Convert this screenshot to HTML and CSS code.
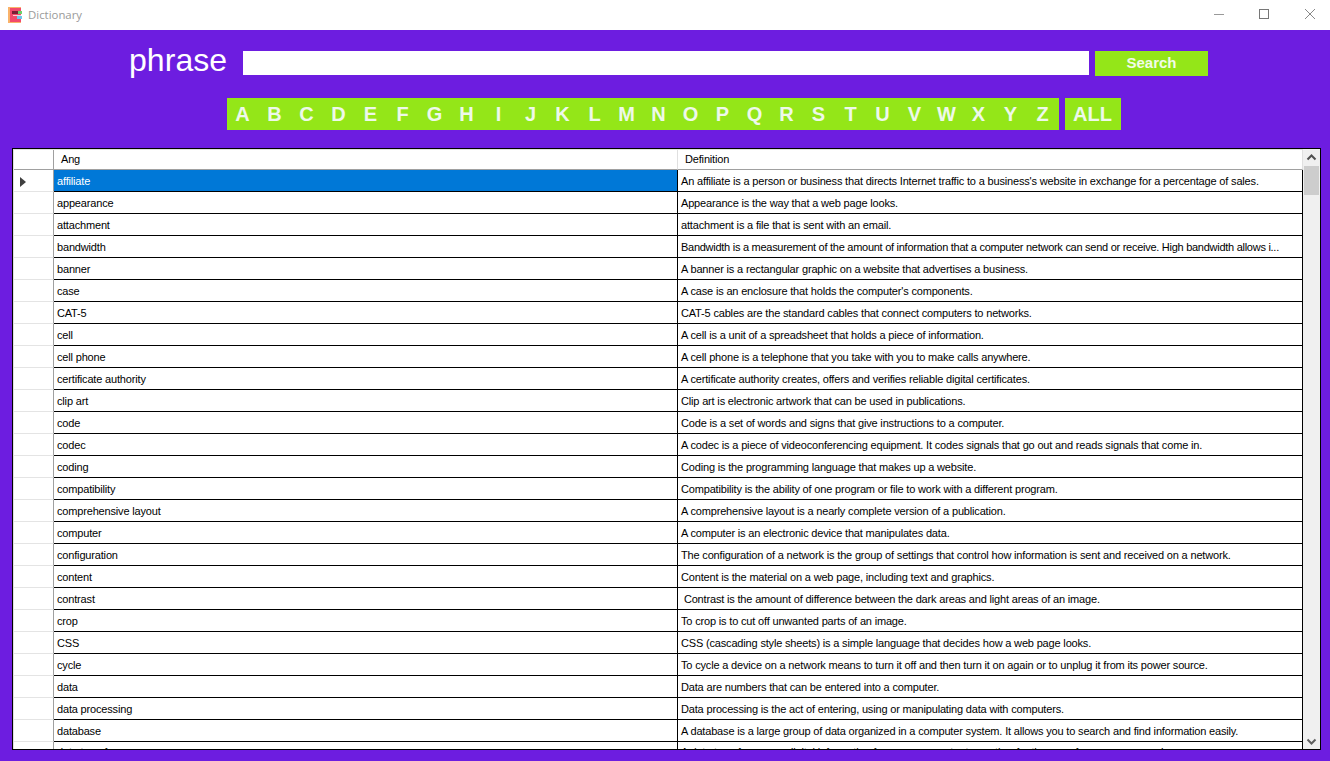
FILE: index.html
```html
<!DOCTYPE html>
<html lang="en">
<head>
<meta charset="utf-8">
<title>Dictionary</title>
<link rel="stylesheet" href="styles.css">
</head>
<body>
<div class="window">
  <header class="titlebar">
    <svg class="app-icon" width="15" height="16" viewBox="0 0 15 16">
      <rect x="0" y="0" width="13" height="16" fill="#f9b26a"/>
      <rect x="2" y="1" width="11" height="14" fill="#f2496b"/>
      <rect x="4" y="4" width="6" height="3" fill="#7a2036"/>
      <rect x="5" y="8" width="8" height="1" fill="#f7d0d8"/>
      <rect x="10" y="4" width="4" height="3" fill="#6fcf6a"/>
      <rect x="9" y="9" width="5" height="3" fill="#6cc4ea"/>
    </svg>
    <span class="app-title">Dictionary</span>
    <div class="win-controls">
      <svg width="12" height="12" viewBox="0 0 12 12"><path d="M1 6.5H11" stroke="#999" fill="none"/></svg>
      <svg width="12" height="12" viewBox="0 0 12 12"><rect x="1.5" y="1.5" width="9" height="9" stroke="#777" fill="none"/></svg>
      <svg class="close" width="12" height="12" viewBox="0 0 12 12"><path d="M1 1L11 11M11 1L1 11" stroke="#888" fill="none"/></svg>
    </div>
  </header>
  <main class="content">
    <div class="search-row">
      <span class="phrase">phrase</span>
      <input class="search-input" type="text">
      <button class="search-btn">Search</button>
    </div>
    <div class="letter-row">
      <div class="letters">
        <button class="letter">A</button><button class="letter">B</button><button class="letter">C</button><button class="letter">D</button><button class="letter">E</button><button class="letter">F</button><button class="letter">G</button><button class="letter">H</button><button class="letter">I</button><button class="letter">J</button><button class="letter">K</button><button class="letter">L</button><button class="letter">M</button><button class="letter">N</button><button class="letter">O</button><button class="letter">P</button><button class="letter">Q</button><button class="letter">R</button><button class="letter">S</button><button class="letter">T</button><button class="letter">U</button><button class="letter">V</button><button class="letter">W</button><button class="letter">X</button><button class="letter">Y</button><button class="letter">Z</button>
      </div>
      <button class="letter all">ALL</button>
    </div>
    <section class="grid">
      <div class="grid-body">
        <div class="row head"><div class="rh"></div><div class="c1">Ang</div><div class="c2">Definition</div></div>
        <div class="row current"><div class="rh"><svg width="6" height="10" viewBox="0 0 6 10"><path d="M0 0L6 5L0 10Z" fill="#404040"/></svg></div><div class="c1 selected">affiliate</div><div class="c2">An affiliate is a person or business that directs Internet traffic to a business's website in exchange for a percentage of sales.</div></div>
        <div class="row"><div class="rh"></div><div class="c1">appearance</div><div class="c2">Appearance is the way that a web page looks.</div></div>
        <div class="row"><div class="rh"></div><div class="c1">attachment</div><div class="c2">attachment is a file that is sent with an email.</div></div>
        <div class="row"><div class="rh"></div><div class="c1">bandwidth</div><div class="c2 tight">Bandwidth is a measurement of the amount of information that a computer network can send or receive. High bandwidth allows i...</div></div>
        <div class="row"><div class="rh"></div><div class="c1">banner</div><div class="c2">A banner is a rectangular graphic on a website that advertises a business.</div></div>
        <div class="row"><div class="rh"></div><div class="c1">case</div><div class="c2">A case is an enclosure that holds the computer's components.</div></div>
        <div class="row"><div class="rh"></div><div class="c1">CAT-5</div><div class="c2">CAT-5 cables are the standard cables that connect computers to networks.</div></div>
        <div class="row"><div class="rh"></div><div class="c1">cell</div><div class="c2">A cell is a unit of a spreadsheet that holds a piece of information.</div></div>
        <div class="row"><div class="rh"></div><div class="c1">cell phone</div><div class="c2">A cell phone is a telephone that you take with you to make calls anywhere.</div></div>
        <div class="row"><div class="rh"></div><div class="c1">certificate authority</div><div class="c2">A certificate authority creates, offers and verifies reliable digital certificates.</div></div>
        <div class="row"><div class="rh"></div><div class="c1">clip art</div><div class="c2">Clip art is electronic artwork that can be used in publications.</div></div>
        <div class="row"><div class="rh"></div><div class="c1">code</div><div class="c2">Code is a set of words and signs that give instructions to a computer.</div></div>
        <div class="row"><div class="rh"></div><div class="c1">codec</div><div class="c2">A codec is a piece of videoconferencing equipment. It codes signals that go out and reads signals that come in.</div></div>
        <div class="row"><div class="rh"></div><div class="c1">coding</div><div class="c2">Coding is the programming language that makes up a website.</div></div>
        <div class="row"><div class="rh"></div><div class="c1">compatibility</div><div class="c2">Compatibility is the ability of one program or file to work with a different program.</div></div>
        <div class="row"><div class="rh"></div><div class="c1">comprehensive layout</div><div class="c2">A comprehensive layout is a nearly complete version of a publication.</div></div>
        <div class="row"><div class="rh"></div><div class="c1">computer</div><div class="c2">A computer is an electronic device that manipulates data.</div></div>
        <div class="row"><div class="rh"></div><div class="c1">configuration</div><div class="c2">The configuration of a network is the group of settings that control how information is sent and received on a network.</div></div>
        <div class="row"><div class="rh"></div><div class="c1">content</div><div class="c2">Content is the material on a web page, including text and graphics.</div></div>
        <div class="row"><div class="rh"></div><div class="c1">contrast</div><div class="c2">&nbsp;Contrast is the amount of difference between the dark areas and light areas of an image.</div></div>
        <div class="row"><div class="rh"></div><div class="c1">crop</div><div class="c2">To crop is to cut off unwanted parts of an image.</div></div>
        <div class="row"><div class="rh"></div><div class="c1">CSS</div><div class="c2">CSS (cascading style sheets) is a simple language that decides how a web page looks.</div></div>
        <div class="row"><div class="rh"></div><div class="c1">cycle</div><div class="c2">To cycle a device on a network means to turn it off and then turn it on again or to unplug it from its power source.</div></div>
        <div class="row"><div class="rh"></div><div class="c1">data</div><div class="c2">Data are numbers that can be entered into a computer.</div></div>
        <div class="row"><div class="rh"></div><div class="c1">data processing</div><div class="c2">Data processing is the act of entering, using or manipulating data with computers.</div></div>
        <div class="row"><div class="rh"></div><div class="c1">database</div><div class="c2">A database is a large group of data organized in a computer system. It allows you to search and find information easily.</div></div>
        <div class="row last"><div class="rh"></div><div class="c1">data transfer</div><div class="c2">A data transfer moves digital information from one computer to another for the use of programs on each.</div></div>
      </div>
      <div class="scrollbar">
        <svg class="arrow" width="17" height="16" viewBox="0 0 17 16"><path d="M4.5 9.5L8.5 5.5L12.5 9.5" stroke="#505050" stroke-width="2" fill="none"/></svg>
        <div class="track"><div class="thumb"></div></div>
        <svg class="arrow" width="17" height="16" viewBox="0 0 17 16"><path d="M4.5 6.5L8.5 10.5L12.5 6.5" stroke="#606060" stroke-width="2" fill="none"/></svg>
      </div>
    </section>
  </main>
</div>
</body>
</html>
```
FILE: styles.css
```css
* { box-sizing: border-box; }
html, body { margin: 0; padding: 0; height: 761px; overflow: hidden; }
body { font-family: "Liberation Sans", Arial, sans-serif; }
.window { display: flex; flex-direction: column; height: 761px; width: 1330px; }
.titlebar { height: 30px; flex: none; background: #fff; display: flex; align-items: center; padding-left: 8px; }
.app-icon { flex: none; }
.app-title { font-family: "Open Sans", sans-serif; font-size: 11.4px; color: #9a9a9a; margin: 0 0 2px 5px; }
.win-controls { margin-left: auto; display: flex; gap: 33px; padding: 0 14px 2px 0; align-items: center; }
.win-controls .close { margin-left: 1px; }
.content { flex: 1; background: #6d1de0; padding-top: 21px; min-height: 0; display: flex; flex-direction: column; }
.search-row { display: flex; align-items: flex-start; height: 25px; padding-left: 129px; }
.phrase { font-size: 32px; line-height: 18px; color: #fff; width: 114px; letter-spacing: 0.05px; }
.search-input { width: 846px; height: 24px; border: 0; background: #fff; padding: 0; margin: 0; }
.search-btn { width: 113px; height: 25px; margin-left: 6px; border: 0; padding: 0 0 2px; background: #94e618; color: #f2fbe8; font: bold 15px "Liberation Sans", Arial, sans-serif; }
.letter-row { display: flex; margin-top: 22px; padding-left: 227px; height: 32px; }
.letters { display: flex; }
.letter { width: 32px; height: 32px; padding: 0 1px 0 0; border: 0; background: #94e618; color: #eef8ea; font: bold 20px "Liberation Sans", Arial, sans-serif; }
.letter.all { width: 56px; margin-left: 6px; }
.grid { margin: 18px 0 0 12px; width: 1309px; height: 602px; border: 1px solid #000; background: #fff; display: flex; overflow: hidden; }
.grid-body { width: 1290px; flex: none; overflow: hidden; border-left: 1px solid #e0e0e0; border-top: 1px solid #e0e0e0; }
.row { display: flex; height: 22px; font-size: 11px; letter-spacing: -0.17px; color: #000; }
.row.head { height: 20px; }
.rh { width: 40px; flex: none; border-right: 1px solid #a0a0a0; border-bottom: 1px solid #e4e4e4; display: flex; align-items: center; padding-left: 6px; }
.current .rh { padding-top: 2px; }
.head .rh { border-bottom: 1px solid #a0a0a0; background: #fff; }
.c1, .c2 { line-height: 21px; padding: 1px 0 0 3px; white-space: nowrap; overflow: hidden; border-bottom: 1px solid #000; }
.last .c1, .last .c2 { padding-top: 0; }
.c1 { width: 624px; flex: none; border-right: 1px solid #000; }
.c2 { width: 625px; flex: none; border-right: 1px solid #000; }
.c2.tight { letter-spacing: -0.27px; }
.head .c1, .head .c2 { border-bottom: 1px solid #a0a0a0; line-height: 19px; padding: 0 0 0 7px; }
.head .c1 { border-right: 1px solid #e0e0e0; }
.head .c2 { border-right: 1px solid #e0e0e0; }
.selected { background: #0078d7; color: #fff; }
.scrollbar { width: 17px; flex: none; background: #f0f0f0; display: flex; flex-direction: column; padding-top: 1px; }
.arrow { flex: none; display: block; }
.track { flex: 1; padding: 0 1px; }
.thumb { height: 29px; background: #cdcdcd; }
```
